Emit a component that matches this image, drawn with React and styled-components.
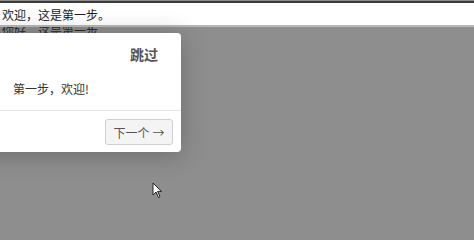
import React from "react";
import styled, { createGlobalStyle } from "styled-components";

const GlobalStyle = createGlobalStyle`
  html, body {
    margin: 0;
    padding: 0;
    background: #8e8e8e;
  }
  body {
    font-family: "Noto Sans CJK SC", "Noto Sans", "Liberation Sans", sans-serif;
  }
`;

const Page = styled.div`
  position: relative;
  height: 237px;
  overflow: hidden;
  padding-top: 1px;
  box-sizing: border-box;
`;

const Highlight = styled.div`
  position: relative;
  z-index: 1;
  background: #fff;
  border-top: 2px solid #3c3c3c;
  border-bottom: 2px solid #b8b8b8;
  height: 22px;
  box-sizing: content-box;
  padding: 2px 0 0 2px;
  height: 20px;
  line-height: 20px;
  font-size: 12px;
  color: #222;
`;

const DimText = styled.div`
  margin-top: -4px;
  padding-left: 2px;
  font-size: 12px;
  line-height: 16px;
  color: #2a2a2a;
`;

const Tooltip = styled.div`
  position: absolute;
  left: -20px;
  top: 33px;
  width: 201px;
  height: 119px;
  z-index: 2;
  background: #fff;
  border-radius: 4px;
  box-shadow: 0 3px 24px rgba(33, 33, 33, 0.3);
  display: flex;
  flex-direction: column;
  box-sizing: border-box;
`;

const Header = styled.div`
  display: flex;
  justify-content: flex-end;
  padding: 12px 23px 0 0;
`;

const Skip = styled.span`
  font-size: 14px;
  line-height: 18px;
  font-weight: bold;
  color: #555;
`;

const Body = styled.div`
  padding: 18px 0 13px 33px;
  font-size: 12px;
  line-height: 16px;
  color: #333;
`;

const Footer = styled.div`
  border-top: 1px solid #e6e6e6;
  display: flex;
  justify-content: flex-end;
  padding: 8px 8px 0 0;
`;

const Button = styled.button`
  height: 26px;
  width: 68px;
  padding: 0;
  background: #f4f4f4;
  border: 1px solid #d0d0d0;
  border-radius: 3px;
  font-family: inherit;
  font-size: 12px;
  color: #555;
  display: flex;
  align-items: center;
  justify-content: center;
  gap: 3px;
`;

const Cursor = styled.svg`
  position: absolute;
  left: 152px;
  top: 182px;
  z-index: 3;
`;

export default function App() {
  return (
    <>
      <GlobalStyle />
      <Page>
        <Highlight>欢迎，这是第一步。</Highlight>
        <DimText>你好，这是第一步</DimText>
        <Tooltip>
          <Header>
            <Skip>跳过</Skip>
          </Header>
          <Body>第一步，欢迎!</Body>
          <Footer>
            <Button>
              下一个 <span>→</span>
            </Button>
          </Footer>
        </Tooltip>
        <Cursor width="11" height="17" viewBox="0 0 11 17">
          <path
            d="M1 1 L1 13 L4 10 L6.5 15.5 L8 14.8 L5.6 9.4 L9.5 9.4 Z"
            fill="#fff"
            stroke="#222"
            strokeWidth="1"
            strokeLinejoin="round"
          />
        </Cursor>
      </Page>
    </>
  );
}
